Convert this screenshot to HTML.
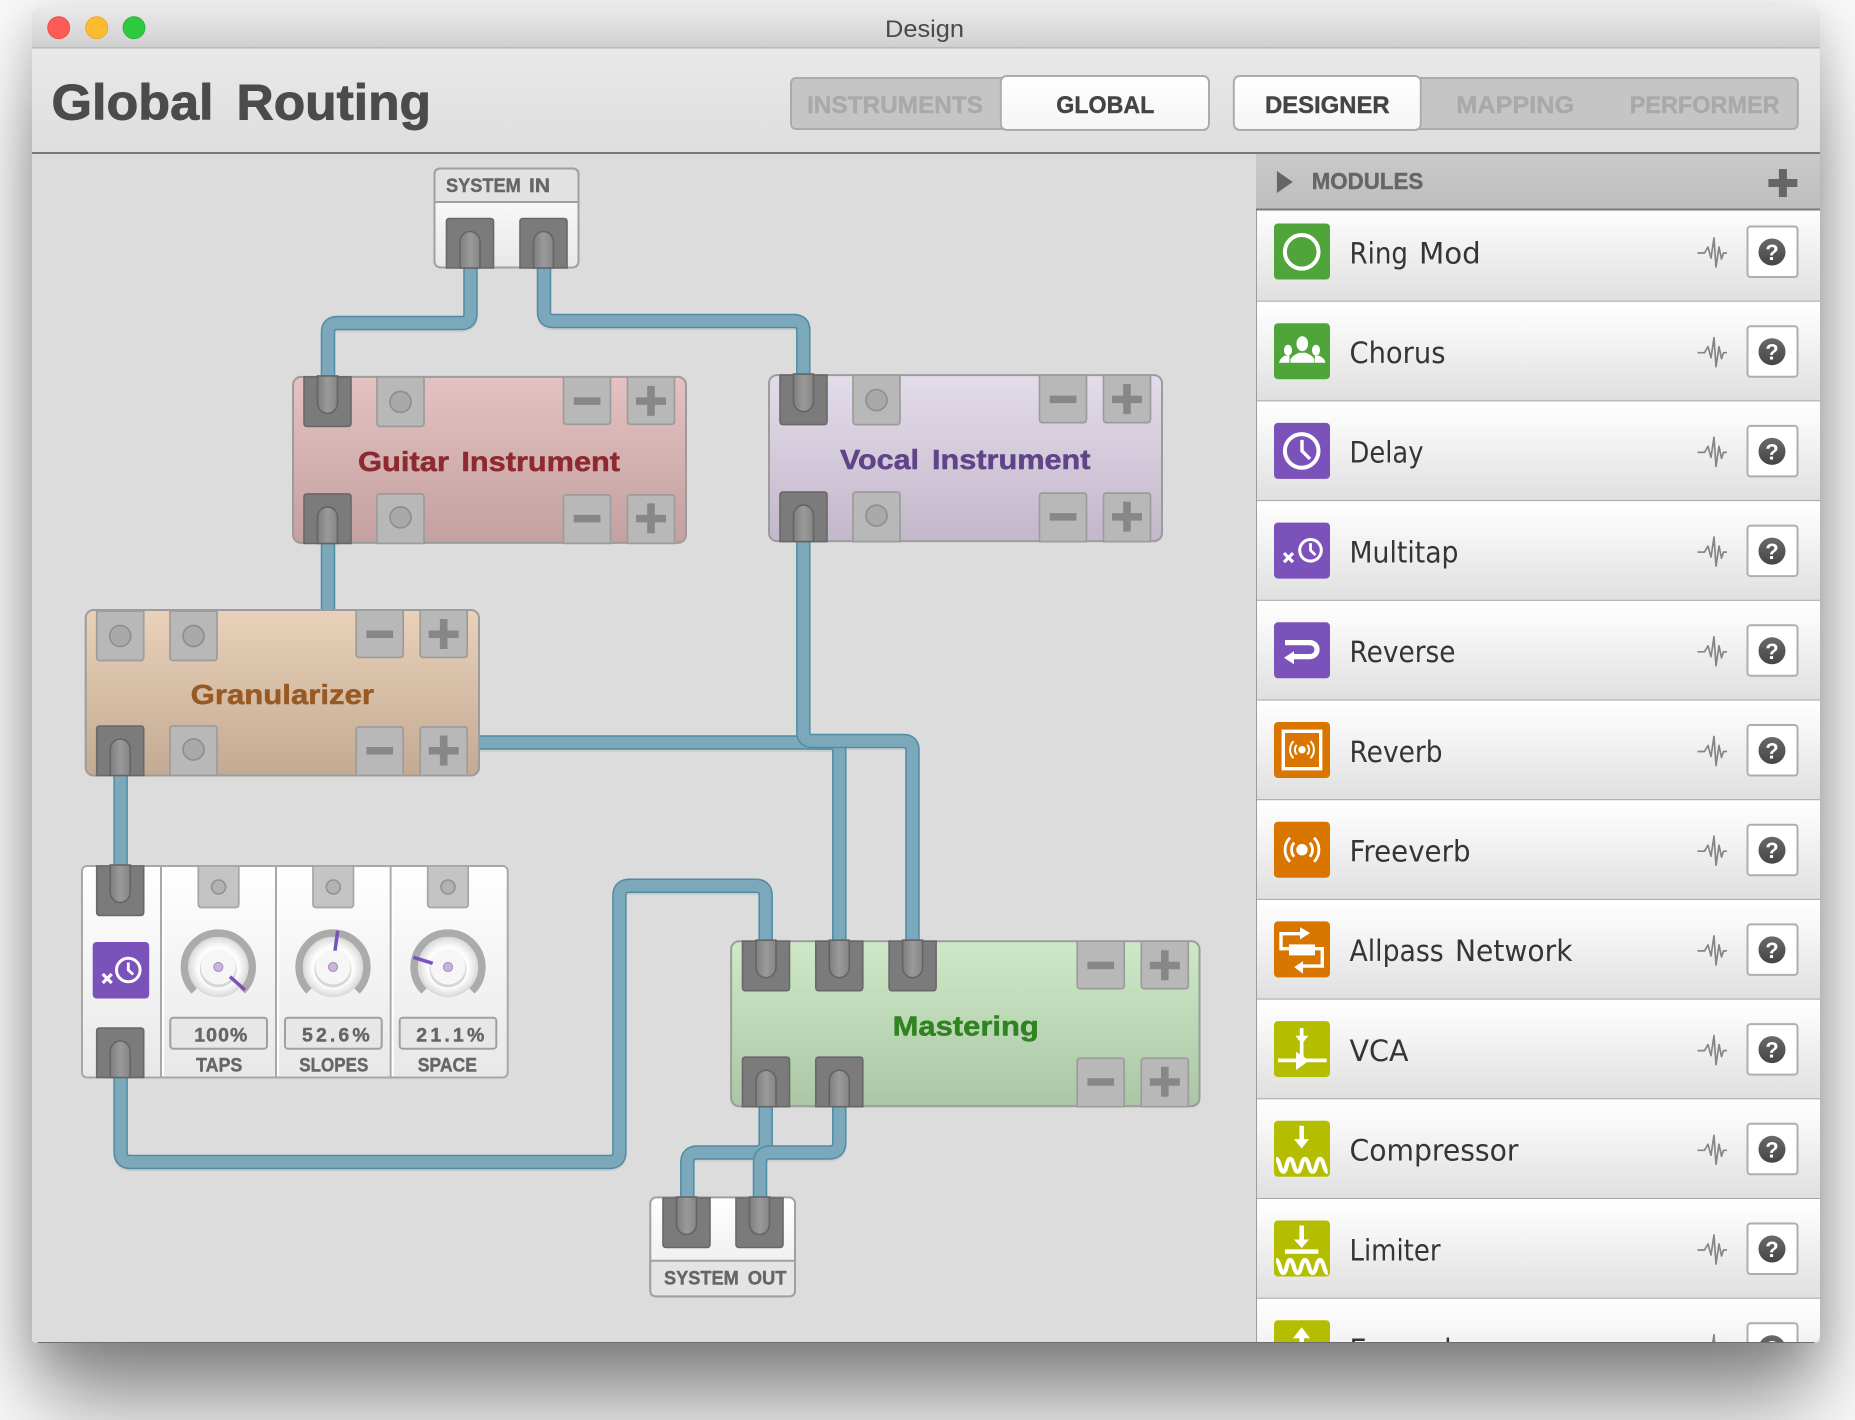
<!DOCTYPE html>
<html>
<head>
<meta charset="utf-8">
<title>Design</title>
<style>
html,body{margin:0;padding:0;width:1855px;height:1420px;overflow:hidden;background:#f9f9f9}
#win{position:absolute;left:32px;top:7px;width:1788px;height:1336px;border-radius:9px 9px 4px 4px;background:#ddd;box-shadow:0 16px 50px 2px rgba(0,0,0,.25),0 80px 80px -10px rgba(0,0,0,.35)}
svg{position:absolute;left:0;top:0}
.l{font-family:"Liberation Sans",sans-serif}
.b{font-family:"Liberation Sans",sans-serif;font-weight:700}
.d{font-family:"DejaVu Sans",sans-serif;font-size:29px;fill:#353535}
.e{fill:none;stroke:#4f8ca1;stroke-width:14.5}
.f{fill:none;stroke:#7ba8ba;stroke-width:11.5}
.s{fill:none;stroke:rgba(0,0,0,.07);stroke-width:14.5}
.w{fill:none;stroke:#fff;stroke-linecap:butt}
.wf{fill:#fff}
.t{font-size:24px}
.ta{fill:#444;stroke:#444;stroke-width:.4}
.ti{fill:#a9a9a9;stroke:#a9a9a9;stroke-width:.4}
.m{font-size:28px;stroke-width:.5}
.v{font-size:19.5px;fill:#666;stroke:#666;stroke-width:.4}
.lb{font-size:19px;fill:#666;stroke:#666;stroke-width:.4}
</style>
</head>
<body>
<div id="win"></div>
<svg width="1855" height="1420" viewBox="0 0 1855 1420" xmlns="http://www.w3.org/2000/svg">
<defs>
<clipPath id="wc"><rect x="32" y="7" width="1788" height="1336" rx="8"/></clipPath>
<linearGradient id="gT" x1="0" y1="0" x2="0" y2="1"><stop offset="0" stop-color="#eaeaea"/><stop offset="1" stop-color="#d0d0d0"/></linearGradient>
<linearGradient id="gH" x1="0" y1="0" x2="0" y2="1"><stop offset="0" stop-color="#e9e9e9"/><stop offset="1" stop-color="#dedede"/></linearGradient>
<linearGradient id="gS" x1="0" y1="0" x2="0" y2="1"><stop offset="0" stop-color="#c9c9c9"/><stop offset="1" stop-color="#bebebe"/></linearGradient>
<linearGradient id="gR" x1="0" y1="0" x2="0" y2="1"><stop offset="0" stop-color="#ffffff"/><stop offset=".25" stop-color="#f8f8f8"/><stop offset="1" stop-color="#dfdfdf"/></linearGradient>
<linearGradient id="gW" x1="0" y1="0" x2="0" y2="1"><stop offset="0" stop-color="#ffffff"/><stop offset="1" stop-color="#e8e8e8"/></linearGradient>
<linearGradient id="gA" x1="0" y1="0" x2="0" y2="1"><stop offset="0" stop-color="#ffffff"/><stop offset="1" stop-color="#f5f5f5"/></linearGradient>
<linearGradient id="gG" x1="0" y1="0" x2="0" y2="1"><stop offset="0" stop-color="#e4c2c2"/><stop offset="1" stop-color="#c4a0a0"/></linearGradient>
<linearGradient id="gV" x1="0" y1="0" x2="0" y2="1"><stop offset="0" stop-color="#e3dcea"/><stop offset="1" stop-color="#c3b7ca"/></linearGradient>
<linearGradient id="gO" x1="0" y1="0" x2="0" y2="1"><stop offset="0" stop-color="#e9d1ba"/><stop offset="1" stop-color="#c4aa92"/></linearGradient>
<linearGradient id="gM" x1="0" y1="0" x2="0" y2="1"><stop offset="0" stop-color="#cee9c7"/><stop offset="1" stop-color="#aac6a5"/></linearGradient>
<linearGradient id="gP" x1="0" y1="0" x2="1" y2="0"><stop offset="0" stop-color="#7e7e7e"/><stop offset=".5" stop-color="#9a9a9a"/><stop offset="1" stop-color="#858585"/></linearGradient>
<linearGradient id="gQ" x1="0" y1="0" x2="0" y2="1"><stop offset="0" stop-color="#6a6a6a"/><stop offset="1" stop-color="#454545"/></linearGradient>
<radialGradient id="gK"><stop offset="0" stop-color="#ffffff"/><stop offset=".7" stop-color="#fcfcfc"/><stop offset="1" stop-color="#dcdcdc"/></radialGradient>

<path id="w1" d="M470.5 262V314Q470.5 323 461.5 323H337Q328 323 328 332V380"/>
<path id="w2" d="M544 262V312Q544 321 553 321H794Q803.3 321 803.3 330V380"/>
<path id="w3" d="M328 540V612"/>
<path id="w4" d="M803.3 538V732Q803.3 741 812.3 741H903.5Q912.5 741 912.5 750V945"/>
<path id="w5" d="M475 742.5H830.3Q839.3 742.5 839.3 751.5V945"/>
<path id="w6" d="M120.6 770V870"/>
<path id="w7" d="M120.6 1075V1152Q120.6 1162 130.6 1162H609.4Q619.4 1162 619.4 1152V895.7Q619.4 885.7 629.4 885.7H755.7Q765.7 885.7 765.7 895.7V945"/>
<path id="w8" d="M765.7 1100V1142.5Q765.7 1152.5 755.7 1152.5H697.3Q687.3 1152.5 687.3 1162.5V1200"/>
<path id="w9" d="M839.3 1100V1142.5Q839.3 1152.5 829.3 1152.5H770Q760 1152.5 760 1162.5V1200"/>

<g id="pt"><path d="M0 0H47V46Q47 49.500 44 49.500H3Q0 49.500 0 46Z" fill="#7b7b7b" stroke="#686868" stroke-width="1.6"/><path d="M13.500 -1H33.500V26A10 10.500 0 0 1 13.500 26Z" fill="url(#gP)" stroke="#646464" stroke-width="1.6"/></g>
<g id="pb"><path d="M0 3.500Q0 .5 3 .5H44Q47 .5 47 3.500V50H0Z" fill="#7b7b7b" stroke="#686868" stroke-width="1.6"/><path d="M13.500 50V24A10 10.500 0 0 1 33.500 24V50Z" fill="url(#gP)" stroke="#646464" stroke-width="1.6"/></g>
<g id="gt"><path d="M0 0H47V46Q47 49.500 44 49.500H3Q0 49.500 0 46Z" fill="#b8b8b8" stroke="#9c9c9c" stroke-width="1.7"/><circle cx="23.500" cy="25" r="10.500" fill="#a9a9a9" stroke="#8f8f8f" stroke-width="1.7"/></g>
<g id="gb"><path d="M0 3.500Q0 .5 3 .5H44Q47 .5 47 3.500V50H0Z" fill="#b8b8b8" stroke="#9c9c9c" stroke-width="1.7"/><circle cx="23.500" cy="24" r="10.500" fill="#a9a9a9" stroke="#8f8f8f" stroke-width="1.7"/></g>
<g id="mt"><path d="M0 0H47V44Q47 47.500 44 47.500H3Q0 47.500 0 44Z" fill="#b8b8b8" stroke="#9c9c9c" stroke-width="1.7"/><rect x="10.200" y="20.500" width="26.700" height="7.500" fill="#878787"/></g>
<g id="mb"><path d="M0 3.500Q0 .5 3 .5H44Q47 .5 47 3.500V49H0Z" fill="#b8b8b8" stroke="#9c9c9c" stroke-width="1.7"/><rect x="10.200" y="20.500" width="26.700" height="7.500" fill="#878787"/></g>
<g id="at"><path d="M0 0H47V44Q47 47.500 44 47.500H3Q0 47.500 0 44Z" fill="#b8b8b8" stroke="#9c9c9c" stroke-width="1.7"/><path d="M8.500 20.500H19.700V9H27.300V20.500H38.500V28H27.300V39H19.700V28H8.500Z" fill="#878787"/></g>
<g id="ab"><path d="M0 3.500Q0 .5 3 .5H44Q47 .5 47 3.500V49H0Z" fill="#b8b8b8" stroke="#9c9c9c" stroke-width="1.7"/><path d="M8.500 20.500H19.700V9H27.300V20.500H38.500V28H27.300V39H19.700V28H8.500Z" fill="#878787"/></g>
<g id="sg"><path d="M0 0H40.500V38Q40.500 41.500 37 41.500H3.500Q0 41.500 0 38Z" fill="#c4c4c4" stroke="#a5a5a5" stroke-width="1.7"/><circle cx="20.300" cy="21" r="7" fill="#b2b2b2" stroke="#929292" stroke-width="1.6"/></g>
<g id="kn">
<path d="M-24 24A33.900 33.900 0 1 1 24 24" fill="none" stroke="#ababab" stroke-width="7.500"/>
<circle r="29.500" fill="url(#gK)" stroke="#d8d8d8" stroke-width="1"/>
<circle cy="2" r="18.500" fill="#d6d6d6"/>
<circle r="17.500" fill="#f6f6f6"/>
<circle r="4.500" fill="#c9b4df" stroke="#a896b8" stroke-width="1.200"/>
</g>
<g id="row">
<rect x="1257" y="-49" width="563" height="100" fill="url(#gR)"/>
<rect x="1257" y="49.700" width="563" height="2.200" fill="#a6a6a6"/>
<rect x="1747.500" y="-24.500" width="50" height="50.500" rx="3" fill="#fff" stroke="#aeaeae" stroke-width="2"/>
<circle cx="1772" cy="1" r="13.500" fill="url(#gQ)"/>
<path transform="translate(1697.5,0)" d="M0 2H7L10.500 -4L13.500 7L16.500 -13L18.500 16L21.500 -4L24 8L26 2H29.500" fill="none" stroke="#858585" stroke-width="1.700" stroke-linejoin="round"/>
</g>
<path id="wv" d="M2 38C5.500 38 5.800 51 9.300 51C12.800 51 12.500 38 16 38C19.800 38 19.900 51 23.700 51C27.500 51 27.200 38 31 38C34.800 38 34.900 51 38.700 51C42.500 51 42.200 38 46 38C49.800 38 50 51 53.700 51" fill="none" stroke="#fff" stroke-width="4.200"/>
</defs>

<g clip-path="url(#wc)">
<rect x="32" y="7" width="1788" height="1336" fill="#dcdcdc"/>
<!-- title bar -->
<rect x="32" y="7" width="1788" height="40" fill="url(#gT)"/>
<rect x="32" y="47" width="1788" height="1.500" fill="#b9b9b9"/>
<circle cx="58.700" cy="27.700" r="11" fill="#fc5b57" stroke="#e8483f" stroke-width=".8"/>
<circle cx="96.700" cy="27.700" r="11" fill="#fdbb2f" stroke="#e5a329" stroke-width=".8"/>
<circle cx="134" cy="27.700" r="11" fill="#2fc93f" stroke="#2aad37" stroke-width=".8"/>
<text class="l" x="885" y="37" font-size="24" fill="#4a4a4a" textLength="79" lengthAdjust="spacingAndGlyphs">Design</text>

<!-- header -->
<rect x="32" y="48.500" width="1788" height="104" fill="url(#gH)"/>
<rect x="32" y="152" width="1788" height="2" fill="#787878"/>
<text class="b" x="51.500" y="119.500" font-size="50" fill="#4b4b4b" stroke="#4b4b4b" stroke-width=".9" textLength="162" lengthAdjust="spacingAndGlyphs">Global</text>
<text class="b" x="236.500" y="119.500" font-size="50" fill="#4b4b4b" stroke="#4b4b4b" stroke-width=".9" textLength="194.500" lengthAdjust="spacingAndGlyphs">Routing</text>

<rect x="791" y="78" width="230" height="51" rx="5" fill="#c5c5c5" stroke="#ababab" stroke-width="2"/>
<rect x="1000.800" y="76" width="208.200" height="54" rx="6" fill="url(#gA)" stroke="#acacac" stroke-width="2"/>
<text class="b t ti" x="807" y="113" textLength="176" lengthAdjust="spacingAndGlyphs">INSTRUMENTS</text>
<text class="b t ta" x="1056.300" y="113" textLength="98" lengthAdjust="spacingAndGlyphs">GLOBAL</text>
<rect x="1400" y="78" width="397.800" height="51" rx="5" fill="#c5c5c5" stroke="#ababab" stroke-width="2"/>
<rect x="1233.800" y="76" width="187" height="54" rx="6" fill="url(#gA)" stroke="#acacac" stroke-width="2"/>
<text class="b t ta" x="1265" y="113" textLength="124.600" lengthAdjust="spacingAndGlyphs">DESIGNER</text>
<text class="b t ti" x="1456.300" y="113" textLength="117.900" lengthAdjust="spacingAndGlyphs">MAPPING</text>
<text class="b t ti" x="1629.700" y="113" textLength="149.900" lengthAdjust="spacingAndGlyphs">PERFORMER</text>

<!-- wires -->
<g transform="translate(0,2)"><use href="#w1" class="s"/><use href="#w2" class="s"/><use href="#w7" class="s"/><use href="#w5" class="s"/><use href="#w4" class="s"/><use href="#w8" class="s"/><use href="#w9" class="s"/></g>
<use href="#w1" class="e"/><use href="#w1" class="f"/>
<use href="#w2" class="e"/><use href="#w2" class="f"/>
<use href="#w3" class="e"/><use href="#w3" class="f"/>
<use href="#w5" class="e"/><use href="#w5" class="f"/>
<use href="#w4" class="e"/><use href="#w4" class="f"/>
<use href="#w6" class="e"/><use href="#w6" class="f"/>
<use href="#w7" class="e"/><use href="#w7" class="f"/>
<use href="#w8" class="e"/><use href="#w8" class="f"/>
<use href="#w9" class="e"/><use href="#w9" class="f"/>

<!-- SYSTEM IN -->
<rect x="434.500" y="168.500" width="144" height="99" rx="6" fill="url(#gW)" stroke="#a0a0a0" stroke-width="2"/>
<path d="M434.500 202V174.500Q434.500 168.500 440.500 168.500H572.500Q578.500 168.500 578.500 174.500V202Z" fill="#e2e2e2" stroke="#a0a0a0" stroke-width="2"/>
<text class="b lb" x="446" y="192" textLength="74.800" lengthAdjust="spacingAndGlyphs">SYSTEM</text>
<text class="b lb" x="529" y="192" textLength="21" lengthAdjust="spacingAndGlyphs">IN</text>
<use href="#pb" x="446.500" y="218"/>
<use href="#pb" x="520" y="218"/>

<!-- Guitar -->
<g transform="translate(293,376.9)">
<rect width="393" height="166" rx="8" fill="url(#gG)" stroke="#9c9c9c" stroke-width="2"/>
<use href="#pt" x="11"/><use href="#gt" x="84"/><use href="#mt" x="270.500"/><use href="#at" x="334.500"/>
<use href="#pb" x="11" y="116.500"/><use href="#gb" x="84" y="116.500"/><use href="#mb" x="270.500" y="117.500"/><use href="#ab" x="334.500" y="117.500"/>
</g>
<text class="b m" x="358" y="471" fill="#8d2a2f" stroke="#8d2a2f" textLength="91" lengthAdjust="spacingAndGlyphs">Guitar</text>
<text class="b m" x="461.400" y="471" fill="#8d2a2f" stroke="#8d2a2f" textLength="158.600" lengthAdjust="spacingAndGlyphs">Instrument</text>

<!-- Vocal -->
<g transform="translate(769,375.1)">
<rect width="393" height="166" rx="8" fill="url(#gV)" stroke="#9c9c9c" stroke-width="2"/>
<use href="#pt" x="11"/><use href="#gt" x="84"/><use href="#mt" x="270.500"/><use href="#at" x="334.500"/>
<use href="#pb" x="11" y="116.500"/><use href="#gb" x="84" y="116.500"/><use href="#mb" x="270.500" y="117.500"/><use href="#ab" x="334.500" y="117.500"/>
</g>
<text class="b m" x="840" y="469" fill="#5f4488" stroke="#5f4488" textLength="79" lengthAdjust="spacingAndGlyphs">Vocal</text>
<text class="b m" x="932" y="469" fill="#5f4488" stroke="#5f4488" textLength="158.500" lengthAdjust="spacingAndGlyphs">Instrument</text>

<!-- Granularizer -->
<g transform="translate(85.7,610)">
<rect width="393.300" height="165.500" rx="8" fill="url(#gO)" stroke="#9c9c9c" stroke-width="2"/>
<use href="#gt" x="11" y="1"/><use href="#gt" x="84.300" y="1"/><use href="#mt" x="270.500"/><use href="#at" x="334.500"/>
<use href="#pb" x="11" y="115.500"/><use href="#gb" x="84.300" y="115.500"/><use href="#mb" x="270.500" y="116.500"/><use href="#ab" x="334.500" y="116.500"/>
</g>
<text class="b m" x="190.700" y="704" fill="#985a24" stroke="#985a24" textLength="183.300" lengthAdjust="spacingAndGlyphs">Granularizer</text>

<!-- Multitap panel -->
<rect x="82" y="866" width="425.700" height="211.500" rx="5" fill="url(#gW)" stroke="#a8a8a8" stroke-width="2"/>
<path d="M161 866V1077M276 866V1077M390.700 866V1077" stroke="#a8a8a8" stroke-width="2"/>
<path d="M163 868V1076M278 868V1076M392.700 868V1076" stroke="#fff" stroke-width="2"/>
<use href="#pt" x="96.700" y="866"/>
<use href="#pb" x="96.700" y="1027.500"/>
<g transform="translate(92.7,942)">
<rect width="56.500" height="56.500" rx="4" fill="#7b52b9"/>
<circle cx="35.600" cy="28" r="11.800" class="w" stroke-width="3"/>
<path d="M35.600 20.500V28L40.500 32.500" class="w" stroke-width="2.800"/>
<path d="M10 32L19 41M19 32L10 41" class="w" stroke-width="3.200"/>
</g>
<use href="#sg" x="198.300" y="866"/><use href="#sg" x="313" y="866"/><use href="#sg" x="427.700" y="866"/>
<use href="#kn" x="218.300" y="967"/><use href="#kn" x="333" y="967"/><use href="#kn" x="448" y="967"/>
<path d="M230 976.700L245 990M335 950.700L337.700 930.700M432.700 963.300L413.300 957.300" stroke="#7b52b9" stroke-width="3.500" fill="none"/>
<g fill="#e7e7e7" stroke="#a0a0a0" stroke-width="2">
<rect x="170.300" y="1017.700" width="96.700" height="31" rx="3"/>
<rect x="285" y="1017.700" width="96.700" height="31" rx="3"/>
<rect x="399.700" y="1017.700" width="96.600" height="31" rx="3"/>
</g>
<text class="b v" x="194.300" y="1041.700" textLength="53" lengthAdjust="spacing">100%</text>
<text class="b v" x="302" y="1041.700" textLength="67.700" lengthAdjust="spacing">52.6%</text>
<text class="b v" x="416.300" y="1041.700" textLength="68" lengthAdjust="spacing">21.1%</text>
<text class="b lb" x="196" y="1071.700" textLength="46.300" lengthAdjust="spacingAndGlyphs">TAPS</text>
<text class="b lb" x="299.300" y="1071.700" textLength="69" lengthAdjust="spacingAndGlyphs">SLOPES</text>
<text class="b lb" x="417.700" y="1071.700" textLength="59.300" lengthAdjust="spacingAndGlyphs">SPACE</text>

<!-- Mastering -->
<g transform="translate(731.1,941.2)">
<rect width="468.400" height="165" rx="8" fill="url(#gM)" stroke="#9c9c9c" stroke-width="2"/>
<use href="#pt" x="11.400"/><use href="#pt" x="84.700"/><use href="#pt" x="158"/>
<use href="#mt" x="346.100"/><use href="#at" x="410.200"/>
<use href="#pb" x="11.400" y="115.500"/><use href="#pb" x="84.700" y="115.500"/>
<use href="#mb" x="346.100" y="116.500"/><use href="#ab" x="410.200" y="116.500"/>
</g>
<text class="b m" x="892.600" y="1035.700" fill="#2f8421" stroke="#2f8421" textLength="146.200" lengthAdjust="spacingAndGlyphs">Mastering</text>

<!-- SYSTEM OUT -->
<rect x="650.300" y="1197.400" width="144.700" height="99" rx="6" fill="url(#gW)" stroke="#a0a0a0" stroke-width="2"/>
<path d="M650.300 1260.700H795V1290.400Q795 1296.400 789 1296.400H656.300Q650.300 1296.400 650.300 1290.400Z" fill="#e4e4e4" stroke="#a0a0a0" stroke-width="2"/>
<text class="b lb" x="664" y="1284.500" textLength="74.800" lengthAdjust="spacingAndGlyphs">SYSTEM</text>
<text class="b lb" x="747.800" y="1284.500" textLength="38.700" lengthAdjust="spacingAndGlyphs">OUT</text>
<use href="#pt" x="663" y="1198"/>
<use href="#pt" x="736" y="1198"/>

<!-- Sidebar -->
<rect x="1256" y="154" width="2" height="1190" fill="#9c9c9c"/>

<g transform="translate(0,251)"><use href="#row"/>
<g transform="translate(1274,-27.5)"><rect width="56" height="56" rx="4" fill="#4fa539"/><circle cx="27.700" cy="28.300" r="16.800" class="w" stroke-width="4"/></g>
<text class="d" x="1349.500" y="12.300" textLength="58.500" lengthAdjust="spacingAndGlyphs">Ring</text>
<text class="d" x="1419" y="12.300" textLength="61.700" lengthAdjust="spacingAndGlyphs">Mod</text>
<text class="b" x="1772" y="9" font-size="22" fill="#fff" text-anchor="middle">?</text></g>

<g transform="translate(0,350.7)"><use href="#row"/>
<g transform="translate(1274,-27.5)"><rect width="56" height="56" rx="4" fill="#4fa539"/>
<g class="wf"><ellipse cx="28.300" cy="20.500" rx="5.800" ry="7.500"/><path d="M16.500 39.500V36Q18 32.500 25 29.500H32Q39 32.500 40.500 36V39.500Z"/>
<ellipse cx="14" cy="27" rx="4" ry="5.500"/><path d="M5 39.500Q6 35 10.500 32.500H15.500V39.500Z"/>
<ellipse cx="42" cy="27" rx="4" ry="5.500"/><path d="M51.500 39.500Q50.500 35 45.500 32.500H41V39.500Z"/></g></g>
<text class="d" x="1349.500" y="12.300" textLength="96" lengthAdjust="spacingAndGlyphs">Chorus</text>
<text class="b" x="1772" y="9" font-size="22" fill="#fff" text-anchor="middle">?</text></g>

<g transform="translate(0,450.4)"><use href="#row"/>
<g transform="translate(1274,-27.5)"><rect width="56" height="56" rx="4" fill="#7b52b9"/><circle cx="27.700" cy="28" r="16.800" class="w" stroke-width="4"/><path d="M28 17V28L36 36" class="w" stroke-width="3.400"/></g>
<text class="d" x="1349.500" y="12.300" textLength="74" lengthAdjust="spacingAndGlyphs">Delay</text>
<text class="b" x="1772" y="9" font-size="22" fill="#fff" text-anchor="middle">?</text></g>

<g transform="translate(0,550.1)"><use href="#row"/>
<g transform="translate(1274,-27.5)"><rect width="56" height="56" rx="4" fill="#7b52b9"/><circle cx="36.500" cy="27.700" r="10.800" class="w" stroke-width="3"/><path d="M36.500 20.500V27.700L41.500 32.500" class="w" stroke-width="2.800"/><path d="M10 30.500L19 39.500M19 30.500L10 39.500" class="w" stroke-width="3.200"/></g>
<text class="d" x="1349.500" y="12.300" textLength="109" lengthAdjust="spacingAndGlyphs">Multitap</text>
<text class="b" x="1772" y="9" font-size="22" fill="#fff" text-anchor="middle">?</text></g>

<g transform="translate(0,649.8)"><use href="#row"/>
<g transform="translate(1274,-27.5)"><rect width="56" height="56" rx="4" fill="#7b52b9"/><path d="M11 20.300H36A7 7 0 0 1 36 34.300H18" class="w" stroke-width="5.200"/><path d="M10 35.500L20 29V42Z" class="wf"/></g>
<text class="d" x="1349.500" y="12.300" textLength="106" lengthAdjust="spacingAndGlyphs">Reverse</text>
<text class="b" x="1772" y="9" font-size="22" fill="#fff" text-anchor="middle">?</text></g>

<g transform="translate(0,749.5)"><use href="#row"/>
<g transform="translate(1274,-27.5)"><rect width="56" height="56" rx="4" fill="#d87600"/><rect x="9.300" y="9.300" width="37.400" height="37.400" class="w" stroke-width="3.400"/><circle cx="28" cy="27.700" r="3.700" class="wf"/><path d="M22.800 22.900A7 7 0 0 0 22.800 32.500M33.200 22.900A7 7 0 0 1 33.200 32.500M19.600 19.200A12 12 0 0 0 19.600 36.200M36.400 19.200A12 12 0 0 1 36.400 36.200" class="w" stroke-width="2" stroke-linecap="round"/></g>
<text class="d" x="1349.500" y="12.300" textLength="93" lengthAdjust="spacingAndGlyphs">Reverb</text>
<text class="b" x="1772" y="9" font-size="22" fill="#fff" text-anchor="middle">?</text></g>

<g transform="translate(0,849.2)"><use href="#row"/>
<g transform="translate(1274,-27.5)"><rect width="56" height="56" rx="4" fill="#d87600"/><circle cx="28" cy="28" r="5.700" class="wf"/><path d="M20.200 21A10.500 10.500 0 0 0 20.200 35M35.800 21A10.500 10.500 0 0 1 35.800 35M16 16A17 17 0 0 0 16 40M40 16A17 17 0 0 1 40 40" class="w" stroke-width="2.800" stroke-linecap="round"/></g>
<text class="d" x="1349.500" y="12.300" textLength="121" lengthAdjust="spacingAndGlyphs">Freeverb</text>
<text class="b" x="1772" y="9" font-size="22" fill="#fff" text-anchor="middle">?</text></g>

<g transform="translate(0,948.9)"><use href="#row"/>
<g transform="translate(1274,-27.5)"><rect width="56" height="56" rx="4" fill="#d87600"/><path d="M15 27.300H7V12.300H27M41 27.300H48.300V44.700H28" class="w" stroke-width="3.400"/><path d="M36 11.700L26 5.700V18ZM20.300 45.700L29 39.700V52.300Z" class="wf"/><rect x="15" y="23" width="26" height="11" class="wf"/></g>
<text class="d" x="1349.500" y="12.300" textLength="94.200" lengthAdjust="spacingAndGlyphs">Allpass</text>
<text class="d" x="1455" y="12.300" textLength="117.500" lengthAdjust="spacingAndGlyphs">Network</text>
<text class="b" x="1772" y="9" font-size="22" fill="#fff" text-anchor="middle">?</text></g>

<g transform="translate(0,1048.6)"><use href="#row"/>
<g transform="translate(1274,-27.5)"><rect width="56" height="56" rx="4" fill="#b5bd00"/><path d="M27.700 7V39M4 39.300H52.700" class="w" stroke-width="3.700"/><path d="M21.500 14.700H34.500L27.700 22.800ZM22 30.700V49L35.300 39.300Z" class="wf"/></g>
<text class="d" x="1349.500" y="12.300" textLength="59" lengthAdjust="spacingAndGlyphs">VCA</text>
<text class="b" x="1772" y="9" font-size="22" fill="#fff" text-anchor="middle">?</text></g>

<g transform="translate(0,1148.3)"><use href="#row"/>
<g transform="translate(1274,-27.5)"><rect width="56" height="56" rx="4" fill="#b5bd00"/><path d="M27.700 5V19" class="w" stroke-width="4.500"/><path d="M20 18.300H35L27.700 27.700Z" class="wf"/><use href="#wv"/></g>
<text class="d" x="1349.500" y="12.300" textLength="169" lengthAdjust="spacingAndGlyphs">Compressor</text>
<text class="b" x="1772" y="9" font-size="22" fill="#fff" text-anchor="middle">?</text></g>

<g transform="translate(0,1248)"><use href="#row"/>
<g transform="translate(1274,-27.5)"><rect width="56" height="56" rx="4" fill="#b5bd00"/><path d="M27.700 5V20" class="w" stroke-width="4.500"/><path d="M20 19H35L27.700 27.500Z" class="wf"/><rect x="11" y="28.800" width="33.300" height="4.500" class="wf"/><use href="#wv" y="1.500"/></g>
<text class="d" x="1349.500" y="12.300" textLength="91" lengthAdjust="spacingAndGlyphs">Limiter</text>
<text class="b" x="1772" y="9" font-size="22" fill="#fff" text-anchor="middle">?</text></g>

<g transform="translate(0,1347.7)"><use href="#row"/>
<g transform="translate(1274,-27.5)"><rect width="56" height="56" rx="4" fill="#b5bd00"/><path d="M27.700 15V32" class="w" stroke-width="4.500"/><path d="M19 18H36L27.700 7Z" class="wf"/></g>
<text class="d" x="1349.500" y="12.300" textLength="130" lengthAdjust="spacingAndGlyphs">Expander</text>
<text class="b" x="1772" y="9" font-size="22" fill="#fff" text-anchor="middle">?</text></g>

<!-- Modules header -->
<rect x="1256" y="154" width="564" height="55" fill="url(#gS)"/>
<rect x="1256" y="208.500" width="564" height="2" fill="#7a7a7a"/>
<path d="M1276.900 171L1292.800 182L1276.900 193Z" fill="#666"/>
<text class="b" x="1311.700" y="189" font-size="23" fill="#666" stroke="#666" stroke-width=".4" textLength="111.500" lengthAdjust="spacingAndGlyphs">MODULES</text>
<path d="M1768.400 179H1778.900V169H1786.900V179H1797.300V187H1786.900V197H1778.900V187H1768.400Z" fill="#666"/>

<rect x="32" y="1342" width="1788" height="1" fill="#6e6e6e"/>
</g>
</svg>
</body>
</html>
